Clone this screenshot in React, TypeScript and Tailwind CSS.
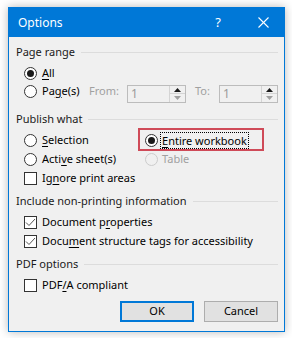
import React from "react";

const U = ({ c }: { c: string }) => <span className="underline underline-offset-[2px] decoration-[1px]">{c}</span>;

const Radio = ({ checked, disabled }: { checked?: boolean; disabled?: boolean }) => (
  <span
    className={`flex h-[13px] w-[13px] shrink-0 items-center justify-center rounded-full border ${
      disabled ? "border-[#cccccc] bg-[#f0f0f0]" : "border-[#333333] bg-white"
    }`}
  >
    {checked && <span className="h-[7px] w-[7px] rounded-full bg-[#1a1a1a]" />}
  </span>
);

const Check = ({ checked }: { checked?: boolean }) => (
  <span className="flex h-[13px] w-[13px] shrink-0 items-center justify-center border border-[#333333] bg-white">
    {checked && (
      <svg width="11" height="11" viewBox="0 0 11 11">
        <polyline points="1,5.5 4,8.5 10,2" fill="none" stroke="#555" strokeWidth="1" />
      </svg>
    )}
  </span>
);

const Header = ({ children }: { children: React.ReactNode }) => (
  <div className="flex h-[16px] items-center gap-[6px]">
    <span className="whitespace-nowrap text-[#1a1a1a]">{children}</span>
    <span className="h-px flex-1 bg-[#dcdcdc]" />
  </div>
);

const Spin = () => (
  <div className="mt-[6px] flex h-[18px] w-[59px] border border-[#bcbcbc] bg-[#f0f0f0]">
    <span className="flex-1 pl-[3px] text-[12px] leading-[16px] text-[#9a9a9a]">1</span>
    <div className="flex w-[16px] flex-col border-l border-[#d4d4d4]">
      <div className="flex h-[8px] items-center justify-center border-b border-[#d4d4d4]">
        <svg width="7" height="4" viewBox="0 0 7 4">
          <polygon points="0,4 7,4 3.5,0" fill="#1a1a1a" />
        </svg>
      </div>
      <div className="flex flex-1 items-center justify-center">
        <svg width="7" height="4" viewBox="0 0 7 4">
          <polygon points="0,0 7,0 3.5,4" fill="#a0a0a0" />
        </svg>
      </div>
    </div>
  </div>
);

export default function App() {
  return (
    <div
      className="h-[338px] w-[292px] overflow-hidden bg-white pl-[8px] pt-[7px] text-[11px] text-black"
      style={{ fontFamily: '"Noto Sans", "Open Sans", sans-serif' }}
    >
      <div className="flex h-[325px] w-[277px] flex-col border border-[#0078d7] bg-[#f0f0f0] shadow-[0_0_9px_rgba(0,0,0,0.28)]">
        {/* Title bar */}
        <div className="flex h-[29px] shrink-0 items-center bg-[#0078d7] pl-[9px] text-white">
          <span className="flex-1 text-[12px]">Options</span>
          <span className="w-[14px] text-center text-[13px]">?</span>
          <span className="ml-[31px] mr-[14px] flex w-[14px] items-center justify-center">
            <svg width="11" height="11" viewBox="0 0 11 11">
              <line x1="0.5" y1="0.5" x2="10.5" y2="10.5" stroke="white" strokeWidth="1.1" />
              <line x1="10.5" y1="0.5" x2="0.5" y2="10.5" stroke="white" strokeWidth="1.1" />
            </svg>
          </span>
        </div>

        {/* Body */}
        <div className="flex flex-1 flex-col pl-[7px] pr-[6px] pt-[7px]">
          <Header>Page range</Header>
          <div className="mt-[4px] flex flex-col pl-[8px]">
            <div className="flex h-[18px] items-center gap-[5px]">
              <Radio checked />
              <span><U c="A" />ll</span>
            </div>
            <div className="flex h-[18px] items-center">
              <Radio />
              <span className="ml-[5px] w-[47px]">Pa<U c="g" />e(s)</span>
              <span className="w-[38px] text-[#a0a0a0]">From:</span>
              <Spin />
              <span className="ml-[9px] w-[24px] text-[#a0a0a0]">To:</span>
              <Spin />
            </div>
          </div>

          <div className="mt-[11px]">
            <Header>Publish what</Header>
          </div>
          <div className="mt-[4px] grid grid-cols-[121px_1fr] pl-[8px]">
            <div className="flex h-[19px] items-center gap-[5px]">
              <Radio />
              <span><U c="S" />election</span>
            </div>
            <div className="relative flex h-[19px] items-center gap-[2px]">
              <span className="pointer-events-none absolute -bottom-[1px] -left-[7px] -top-[3px] w-[126px] border-2 border-[#cf4a58]" />
              <Radio checked />
              <span className="border border-dotted border-black px-[1px] leading-[15px]"><U c="E" />ntire workbook</span>
            </div>
            <div className="flex h-[19px] items-center gap-[5px]">
              <Radio />
              <span>Acti<U c="v" />e sheet(s)</span>
            </div>
            <div className="flex h-[19px] items-center gap-[4px]">
              <Radio disabled />
              <span className="text-[#a0a0a0]">Table</span>
            </div>
            <div className="col-span-2 flex h-[19px] items-center gap-[5px]">
              <Check />
              <span>Ig<U c="n" />ore print areas</span>
            </div>
          </div>

          <div className="mt-[5px]">
            <Header>Include non-printing information</Header>
          </div>
          <div className="mt-[4px] flex flex-col pl-[8px]">
            <div className="flex h-[19px] items-center gap-[5px]">
              <Check checked />
              <span>Document p<U c="r" />operties</span>
            </div>
            <div className="flex h-[19px] items-center gap-[5px]">
              <Check checked />
              <span>Docu<U c="m" />ent structure tags for accessibility</span>
            </div>
          </div>

          <div className="mt-[5px]">
            <Header>PDF options</Header>
          </div>
          <div className="mt-[4px] flex flex-col pl-[8px]">
            <div className="flex h-[19px] items-center gap-[5px]">
              <Check />
              <span>PDF<U c="/" />A compliant</span>
            </div>
          </div>

          <div className="mt-[6px] flex justify-end gap-[10px] pr-[0px]">
            <button className="flex h-[21px] w-[74px] items-center justify-center border-2 border-[#0078d7] bg-[#e1e1e1]">
              OK
            </button>
            <button className="flex h-[21px] w-[74px] items-center justify-center border border-[#adadad] bg-[#e1e1e1]">
              Cancel
            </button>
          </div>
        </div>
      </div>
    </div>
  );
}
